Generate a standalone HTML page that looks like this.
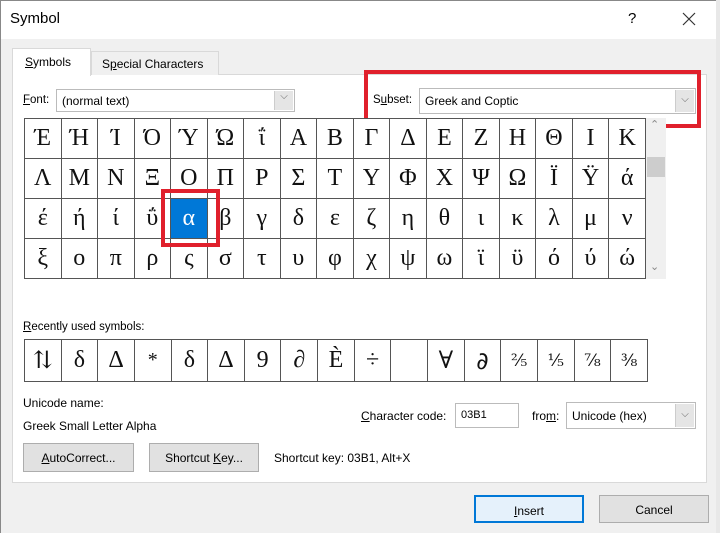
<!DOCTYPE html>
<html><head><meta charset="utf-8"><style>
*{box-sizing:border-box;margin:0;padding:0}
body{width:720px;height:533px;background:#f0f0f0;font-family:"Liberation Sans","DejaVu Sans",sans-serif;font-size:12px;color:#000;position:relative;overflow:hidden}
.a{position:absolute}
table{border-collapse:collapse;position:absolute;table-layout:fixed}
td{border:1px solid #555;text-align:center;padding:0;font-family:"Liberation Serif","DejaVu Serif",serif;font-size:24px;color:#111;background:#fff;overflow:hidden;white-space:nowrap}
.btn{position:absolute;background:#e1e1e1;border:1px solid #adadad;text-align:center;font-size:12px}
.inp{position:absolute;background:#fff;border:1px solid #bbb;font-size:12px;padding-left:5px}
.dd{position:absolute;top:1px;right:1px;width:19px;bottom:1px;background:#e5e5e5;border-left:1px solid #ccc;color:#666;font-size:10px;text-align:center}
u{text-decoration:underline}
.fr{font-family:"DejaVu Serif",serif;font-size:17px}
</style></head><body>
<div class="a" style="left:0;top:0;width:720px;height:533px;border:1px solid #888;border-bottom:none"></div>
<div class="a" style="left:1px;top:1px;width:715px;height:38px;background:#fff"></div>
<div class="a" style="left:10px;top:10px;font-size:15px">Symbol</div>
<div class="a" style="left:628px;top:10px;font-size:15px">?</div>
<svg class="a" style="left:682px;top:12px" width="14" height="14"><path d="M1 1L13 13M13 1L1 13" stroke="#333" stroke-width="1.2"/></svg>
<div class="a" style="left:716px;top:0;width:4px;height:533px;background:#e8e8e8"></div>
<div class="a" style="left:12px;top:74px;width:695px;height:409px;background:#fff;border:1px solid #d9d9d9"></div>
<div class="a" style="left:12px;top:48px;width:79px;height:28px;background:#fff;border:1px solid #d9d9d9;border-bottom:none;padding:6px 0 0 12px"><u>S</u>ymbols</div>
<div class="a" style="left:91px;top:51px;width:128px;height:24px;background:#f0f0f0;border:1px solid #d9d9d9;border-bottom:none;padding:5px 0 0 10px">S<u>p</u>ecial Characters</div>
<div class="a" style="left:23px;top:94px;font-size:11.5px"><u>F</u>ont:</div>
<div class="inp" style="left:56px;top:89px;width:239px;height:23px;padding-top:4px">(normal text)<div class="dd">⌵</div></div>
<div class="a" style="left:373px;top:94px;font-size:11.5px">S<u>u</u>bset:</div>
<div class="inp" style="left:419px;top:88px;width:277px;height:26px;padding-top:5px">Greek and Coptic<div class="dd" style="padding-top:4px">⌵</div></div>
<div class="a" style="left:364px;top:70px;width:337px;height:58px;border:4px solid #e0202c"></div>
<table style="left:24px;top:118px;width:622px;height:161px">
<tr><td>Έ</td><td>Ή</td><td>Ί</td><td>Ό</td><td>Ύ</td><td>Ώ</td><td>ΐ</td><td>Α</td><td>Β</td><td>Γ</td><td>Δ</td><td>Ε</td><td>Ζ</td><td>Η</td><td>Θ</td><td>Ι</td><td>Κ</td></tr>
<tr><td>Λ</td><td>Μ</td><td>Ν</td><td>Ξ</td><td>Ο</td><td>Π</td><td>Ρ</td><td>Σ</td><td>Τ</td><td>Υ</td><td>Φ</td><td>Χ</td><td>Ψ</td><td>Ω</td><td>Ϊ</td><td>Ϋ</td><td>ά</td></tr>
<tr><td>έ</td><td>ή</td><td>ί</td><td>ΰ</td><td style="background:#0078d7;color:#fff">α</td><td>β</td><td>γ</td><td>δ</td><td>ε</td><td>ζ</td><td>η</td><td>θ</td><td>ι</td><td>κ</td><td>λ</td><td>μ</td><td>ν</td></tr>
<tr><td>ξ</td><td>ο</td><td>π</td><td>ρ</td><td>ς</td><td>σ</td><td>τ</td><td>υ</td><td>φ</td><td>χ</td><td>ψ</td><td>ω</td><td>ϊ</td><td>ϋ</td><td>ό</td><td>ύ</td><td>ώ</td></tr>
</table>
<div class="a" style="left:646px;top:118px;width:20px;height:161px;background:#f0f0f0"></div>
<div class="a" style="left:647px;top:157px;width:18px;height:20px;background:#cdcdcd"></div>
<div class="a" style="left:650px;top:118px;color:#888;font-size:11px">⌃</div>
<div class="a" style="left:650px;top:260px;color:#888;font-size:11px">⌄</div>
<div class="a" style="left:161px;top:189px;width:59px;height:58px;border:4px solid #e0202c"></div>
<div class="a" style="left:23px;top:321px;font-size:11.5px"><u>R</u>ecently used symbols:</div>
<table style="left:24px;top:339px;width:624px;height:43px">
<tr><td>⇅</td><td>δ</td><td>Δ</td><td style="font-size:20px">*</td><td>δ</td><td>Δ</td><td>9</td><td style="font-style:italic">∂</td><td>È</td><td>÷</td><td></td><td>∀</td><td style="font-family:'DejaVu Sans',sans-serif">∂</td><td class="fr">⅖</td><td class="fr">⅕</td><td class="fr">⅞</td><td class="fr">⅜</td></tr>
</table>
<div class="a" style="left:23px;top:396px">Unicode name:</div>
<div class="a" style="left:23px;top:419px">Greek Small Letter Alpha</div>
<div class="a" style="left:361px;top:409px"><u>C</u>haracter code:</div>
<div class="inp" style="left:455px;top:403px;width:64px;height:25px;padding-top:5px;font-size:11px">03B1</div>
<div class="a" style="left:532px;top:409px">fro<u>m</u>:</div>
<div class="inp" style="left:566px;top:402px;width:130px;height:27px;padding-top:6px">Unicode (hex)<div class="dd" style="padding-top:5px">⌵</div></div>
<div class="btn" style="left:23px;top:443px;width:111px;height:29px;padding-top:7px"><u>A</u>utoCorrect...</div>
<div class="btn" style="left:149px;top:443px;width:110px;height:29px;padding-top:7px">Shortcut <u>K</u>ey...</div>
<div class="a" style="left:274px;top:451px">Shortcut key: 03B1, Alt+X</div>
<div class="btn" style="left:474px;top:495px;width:110px;height:28px;padding-top:7px;border:2px solid #0078d7;background:#e5f1fb"><u>I</u>nsert</div>
<div class="btn" style="left:599px;top:495px;width:110px;height:28px;padding-top:7px">Cancel</div>
</body></html>
